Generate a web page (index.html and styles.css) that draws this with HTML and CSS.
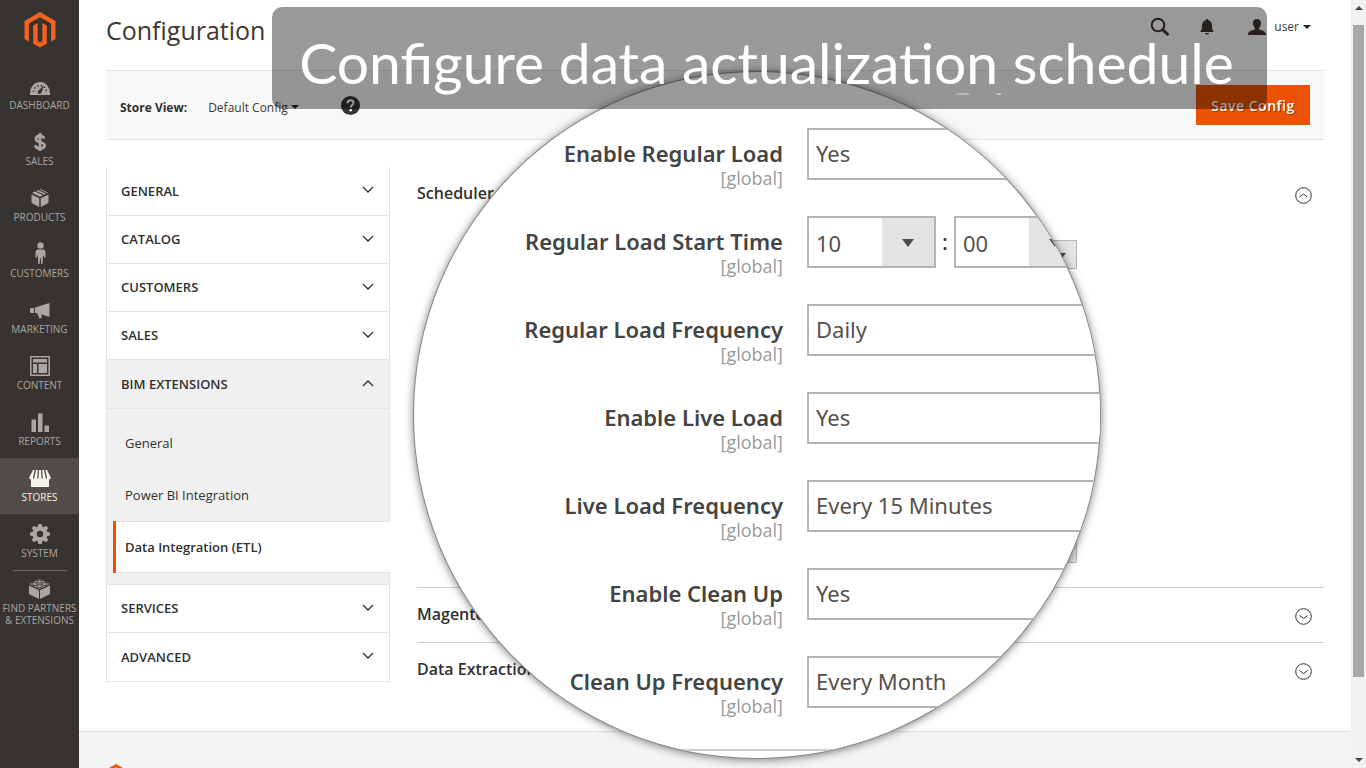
FILE: index.html
```html
<!DOCTYPE html>
<html lang="en">

<head>
    <meta charset="UTF-8">
    <meta name="viewport" content="width=device-width, initial-scale=1.0">
    <title>Configuration</title>
    <link rel="stylesheet" href="styles.css">
</head>

<body>
    <div class="page">
        <nav class="sidebar">
            <a href="#" class="logo" aria-label="Home">
                <svg width="32" height="36" viewBox="0 0 32 36" fill="#f26322">
                    <path d="M16 0L31.500 9v18l-4.500 2.600V11.600L16 5.200 5 11.600v18L.5 27V9z" />
                    <path d="M9.200 13.500l4.500-2.600v18.200l2.300 1.400 2.300-1.400V10.900l4.500 2.600v18.200L16 35.600l-6.800-3.900z" />
                </svg>
            </a>
            <ul class="menu">
                <li><a href="#">
                    <svg width="20" height="20" viewBox="0 0 20 20"><path fill="currentColor" d="M0 17a10 11 0 0 1 20 0v2H0z" /><path stroke="#373330" stroke-width="1.500" fill="none" stroke-dasharray="1.500 2" d="M3.500 16a6.500 6.500 0 0 1 13 0" /><path fill="#373330" d="M14 9l-2.300 7a2 2 0 1 1-2.600-2z" /></svg>
                    <span>DASHBOARD</span></a></li>
                <li><a href="#">
                    <svg width="20" height="20" viewBox="0 0 20 20"><path fill="none" stroke="currentColor" stroke-width="2.800" d="M14 6.500C13.500 4.500 12 4 10 4 7.500 4 6 5 6 7c0 4.500 8.500 2 8.500 6.500 0 2-2 3-4.500 3s-4.300-1-4.700-3.300M10 1v18" /></svg>
                    <span>SALES</span></a></li>
                <li><a href="#">
                    <svg width="20" height="20" viewBox="0 0 20 20" fill="currentColor"><path d="M1.500 6.500l7.800 3.700v8.800l-7.800-4zM18.500 6.500l-7.800 3.700v8.800l7.800-4zM2 5l3-1.500 8 3.800-3 1.500zM6.200 3L8 2.100l8 3.700-1.800.9zM9.500 1.500l1-.5L18 4.800l-.8.500z" /></svg>
                    <span>PRODUCTS</span></a></li>
                <li><a href="#">
                    <svg width="20" height="22" viewBox="0 0 20 22" fill="currentColor"><circle cx="10.500" cy="3.500" r="3.200" /><path d="M7 7.500h7l1.500 2v6H14l-.8-3L12.500 22h-1.300l-.5-6h-.6l-.5 6H8.300l-.6-9.500-.8 3H5.500v-6z" /></svg>
                    <span>CUSTOMERS</span></a></li>
                <li><a href="#">
                    <svg width="20" height="20" viewBox="0 0 20 20" fill="currentColor"><path d="M1 8h3v5H1l-1-1V9zM5 7.500L19.500 3v14L11 14.200l1 3.300-2.500 1.300L7.300 13.300 5 13z" /></svg>
                    <span>MARKETING</span></a></li>
                <li><a href="#">
                    <svg width="20" height="20" viewBox="0 0 20 20"><path fill="none" stroke="currentColor" stroke-width="1.500" d="M.8.800h18.400v18.400H.8z" /><path fill="currentColor" d="M3 3h14v3.500H3zM3 8h4v9H3zM8.500 8H17v9H8.500z" /></svg>
                    <span>CONTENT</span></a></li>
                <li><a href="#">
                    <svg width="20" height="20" viewBox="0 0 20 20" fill="currentColor"><path d="M1.500 7.500h4.500V20H1.500zM8 1.500h4.500V20H8zM14.500 13.500H19V20h-4.500z" /></svg>
                    <span>REPORTS</span></a></li>
                <li class="active"><a href="#">
                    <svg width="22" height="20" viewBox="0 0 22 20" fill="currentColor"><path d="M4 2h14l4 8a2.200 2.200 0 0 1-2 1.500V19H2v-7.500A2.200 2.200 0 0 1 0 10z" /><path stroke="#524d49" stroke-width="1.300" d="M6.300 2L4.500 10.500M9.500 2l-.7 8.500M12.500 2l.7 8.500M15.700 2l1.800 8.500" /></svg>
                    <span>STORES</span></a></li>
                <li><a href="#">
                    <svg width="20" height="20" viewBox="0 0 20 20"><g fill="currentColor"><circle cx="10" cy="10" r="7.500" /><path id="cog" d="M8.400 0h3.200l1 4v12l-1 4H8.400l-1-4V4z" /><use href="#cog" transform="rotate(45 10 10)" /><use href="#cog" transform="rotate(90 10 10)" /><use href="#cog" transform="rotate(135 10 10)" /></g><circle cx="10" cy="10" r="3.200" fill="#373330" /></svg>
                    <span>SYSTEM</span></a></li>
                <li class="partners"><a href="#">
                    <svg width="21" height="20" viewBox="0 0 21 20"><path fill="currentColor" d="M0 6.500l10 4.800V20L0 15zM21 6.500l-10 4.800V20l10-5zM.5 5L10.500 0l10 5-10 5z" /><g fill="currentColor" stroke="#373330"><ellipse cx="10.500" cy="2.600" rx="2.600" ry="1.500" /><ellipse cx="5.500" cy="5" rx="2.600" ry="1.500" /><ellipse cx="15.500" cy="5" rx="2.600" ry="1.500" /><ellipse cx="10.500" cy="7.300" rx="2.600" ry="1.500" /></g></svg>
                    <span>FIND PARTNERS &amp; EXTENSIONS</span></a></li>
            </ul>
        </nav>

        <div class="wrapper">
            <header class="header">
                <h1>Configuration</h1>
                <div class="header-tools">
                    <button class="icon-button" aria-label="Search">
                        <svg width="20" height="20" viewBox="0 0 20 20" fill="none" stroke="#41362f"><circle cx="8" cy="8" r="6.300" stroke-width="2" /><path stroke-width="3" d="M12.800 12.800l5.700 5.200" /></svg>
                    </button>
                    <button class="icon-button" aria-label="Notifications">
                        <svg width="14" height="16" viewBox="0 0 14 16" fill="#41362f"><path d="M7 0a1.500 1.500 0 0 1 1.400 1.300C11 2 12 4 12 7c0 3 .5 4.500 2 6H0c1.500-1.500 2-3 2-6 0-3 1-5 3.600-5.700A1.500 1.500 0 0 1 7 0zM5 14h4a2 1.500 0 0 1-4 0z" /></svg>
                    </button>
                    <button class="user">
                        <svg width="18" height="16" viewBox="0 0 18 16" fill="#41362f"><path d="M9 0c2.700 0 4 1.800 4 4.300 0 2-.8 3.700-1.900 4.700v1.600c3 .9 6.900 1.400 6.900 5.400H0c0-4 3.900-4.500 6.900-5.400V9C5.800 8 5 6.300 5 4.300 5 1.800 6.300 0 9 0z" /></svg>
                        <span class="user-name">user <span class="caret"></span></span>
                    </button>
                </div>
            </header>

            <div class="toolbar">
                <span class="store-label">Store View:</span>
                <button class="store-switch">Default Config <span class="caret"></span></button>
                <button class="help" aria-label="Help">
                    <svg width="19" height="19" viewBox="0 0 19 19"><circle cx="9.500" cy="9.500" r="9.500" fill="#373330" /><path fill="none" stroke="#fff" stroke-width="2" d="M6.500 7.200c0-2 1.300-3 3-3s3 1 3 2.600c0 2.200-2.800 2.300-2.800 4.700" /><circle cx="9.700" cy="14.200" r="1.300" fill="#fff" /></svg>
                </button>
                <button class="save">Save Config</button>
            </div>

            <main class="columns">
                <nav class="tabs">
                    <button class="tab">GENERAL <svg class="chevron" viewBox="0 0 12 8"><path d="M1 1l5 5 5-5" /></svg></button>
                    <button class="tab">CATALOG <svg class="chevron" viewBox="0 0 12 8"><path d="M1 1l5 5 5-5" /></svg></button>
                    <button class="tab">CUSTOMERS <svg class="chevron" viewBox="0 0 12 8"><path d="M1 1l5 5 5-5" /></svg></button>
                    <button class="tab">SALES <svg class="chevron" viewBox="0 0 12 8"><path d="M1 1l5 5 5-5" /></svg></button>
                    <button class="tab open">BIM EXTENSIONS <svg class="chevron" viewBox="0 0 12 8"><path d="M1 7l5-5 5 5" /></svg></button>
                    <ul class="subtabs">
                        <li><a href="#">General</a></li>
                        <li><a href="#">Power BI Integration</a></li>
                        <li class="current"><a href="#">Data Integration (ETL)</a></li>
                    </ul>
                    <button class="tab">SERVICES <svg class="chevron" viewBox="0 0 12 8"><path d="M1 1l5 5 5-5" /></svg></button>
                    <button class="tab">ADVANCED <svg class="chevron" viewBox="0 0 12 8"><path d="M1 1l5 5 5-5" /></svg></button>
                </nav>

                <div class="sections">
                    <section class="section">
                        <button class="section-title">Scheduler
                            <svg class="toggle" viewBox="0 0 17 17"><circle cx="8.500" cy="8.500" r="7.800" /><path d="M4.500 10l4-3 4 3" /></svg>
                        </button>
                        <div class="section-body">
                            <span class="select small"><select aria-label="Regular load"><option></option></select></span>
                            <span class="select small"><select aria-label="Clean up"><option></option></select></span>
                        </div>
                    </section>
                    <section class="section">
                        <button class="section-title">Magento
                            <svg class="toggle" viewBox="0 0 17 17"><circle cx="8.500" cy="8.500" r="7.800" /><path d="M4.500 7.500l4 3 4-3" /></svg>
                        </button>
                    </section>
                    <section class="section">
                        <button class="section-title">Data Extraction
                            <svg class="toggle" viewBox="0 0 17 17"><circle cx="8.500" cy="8.500" r="7.800" /><path d="M4.500 7.500l4 3 4-3" /></svg>
                        </button>
                    </section>
                </div>
            </main>

            <footer class="footer">
                <svg width="20" height="22" viewBox="0 0 32 36" fill="#eb5202"><path d="M16 0L31.500 9v18l-4.500 2.600V11.600L16 5.200 5 11.600v18L.5 27V9z" /></svg>
            </footer>
        </div>

        <div class="scrollbar">
            <span class="arrow up"></span>
            <span class="thumb"></span>
            <span class="arrow down"></span>
        </div>
    </div>

    <!-- magnified scheduler form -->
    <form class="lens">
        <div class="field">
            <label for="regular">Enable Regular Load <small>[global]</small></label>
            <span class="select"><select id="regular"><option>Yes</option></select></span>
        </div>
        <div class="field">
            <label for="hour">Regular Load Start Time <small>[global]</small></label>
            <div class="time">
                <span class="select"><select id="hour"><option>10</option></select></span>
                <span>:</span>
                <span class="select"><select aria-label="Minutes"><option>00</option></select></span>
            </div>
        </div>
        <div class="field">
            <label for="frequency">Regular Load Frequency <small>[global]</small></label>
            <span class="select"><select id="frequency"><option>Daily</option></select></span>
        </div>
        <div class="field">
            <label for="live">Enable Live Load <small>[global]</small></label>
            <span class="select"><select id="live"><option>Yes</option></select></span>
        </div>
        <div class="field">
            <label for="live-frequency">Live Load Frequency <small>[global]</small></label>
            <span class="select"><select id="live-frequency"><option>Every 15 Minutes</option></select></span>
        </div>
        <div class="field">
            <label for="clean">Enable Clean Up <small>[global]</small></label>
            <span class="select"><select id="clean"><option>Yes</option></select></span>
        </div>
        <div class="field">
            <label for="clean-frequency">Clean Up Frequency <small>[global]</small></label>
            <span class="select"><select id="clean-frequency"><option>Every Month</option></select></span>
        </div>
        <hr>
    </form>

    <div class="banner">
        Configure data actualization schedule
        <svg class="marks" width="46" height="2" viewBox="0 0 46 2" fill="#ddd"><path d="M0 1q7-1.500 14 0v.5H0zM41 .5h4V2h-4z" /></svg>
    </div>
</body>

</html>
```

FILE: styles.css
```css
* {
    box-sizing: border-box;
}

body {
    margin: 0;
    height: 100vh;
    overflow: hidden;
    position: relative;
    font-family: "Open Sans", "Noto Sans", sans-serif;
    font-size: 13px;
    color: #303030;
    background-color: #fff;
}

button {
    font: inherit;
    color: inherit;
    background: none;
    border: none;
    padding: 0;
    cursor: pointer;
}

a {
    color: inherit;
    text-decoration: none;
}

ul {
    list-style: none;
    margin: 0;
    padding: 0;
}

.page {
    display: flex;
    height: 100%;
}

/* left menu */
.sidebar {
    width: 79px;
    flex-shrink: 0;
    background-color: #373330;
    color: #aaa6a0;
}

.logo {
    display: flex;
    justify-content: center;
    height: 66px;
    padding-top: 12px;
}

.menu li {
    height: 56px;
    font-size: 10px;
    line-height: 12px;
    text-align: center;
}

.menu a {
    display: flex;
    flex-direction: column;
    align-items: center;
    justify-content: flex-end;
    gap: 3px;
    height: 100%;
    padding-bottom: 11px;
}

.menu .active {
    background-color: #524d49;
    color: #f7f3eb;
}

.menu .partners {
    height: auto;
    margin: 0 -8px;
}

.menu .partners a {
    padding: 8px 8px 0;
}

.menu .partners::before {
    content: "";
    display: block;
    width: 54px;
    margin: 0 auto;
    border-top: 1px solid #736963;
}

.wrapper {
    flex: 1;
    display: flex;
    flex-direction: column;
    min-width: 0;
    overflow: hidden;
}

/* header */
.header {
    display: flex;
    flex-shrink: 0;
    justify-content: space-between;
    height: 70px;
    padding: 0 40px 0 27px;
}

h1 {
    margin: 13px 0 0;
    font-size: 25px;
    line-height: 34px;
    font-weight: 400;
    color: #41362f;
}

.header-tools {
    display: flex;
    align-items: center;
    gap: 30px;
    height: 53px;
}

.header-tools button {
    display: flex;
    align-items: center;
}

.header-tools .user {
    gap: 8px;
    margin-left: 4px;
    font-size: 12px;
    color: #41362f;
}

.user-name {
    display: flex;
    align-items: center;
    gap: 4px;
}

.caret {
    display: inline-block;
    border: 4px solid transparent;
    border-top-color: #222;
    border-bottom: none;
}

.toolbar {
    display: flex;
    flex-shrink: 0;
    align-items: center;
    height: 70px;
    margin: 0 27px;
    padding: 0 14px;
    background-color: #f8f8f8;
    border-top: 1px solid #e3e3e3;
    border-bottom: 1px solid #e3e3e3;
}

.store-label {
    font-size: 12px;
    font-weight: 700;
    padding-top: 4px;
}

.store-switch {
    display: flex;
    align-items: center;
    gap: 3px;
    margin-left: 21px;
    padding-top: 4px;
    font-size: 12px;
    color: #41362f;
}

.help {
    display: flex;
    margin-left: 42px;
}

.save {
    width: 114px;
    height: 40px;
    margin-left: auto;
    background-color: #eb5202;
    color: #fff;
    font-size: 14px;
    font-weight: 600;
    letter-spacing: 0.5px;
    text-shadow: 1px 1px 0 rgba(0, 0, 0, 0.3);
}

/* config tabs */
.columns {
    display: flex;
    flex-shrink: 0;
    gap: 27px;
    height: 591px;
    padding: 27px 27px 0;
}

.tabs {
    width: 284px;
    flex-shrink: 0;
}

.tab {
    display: flex;
    align-items: center;
    justify-content: space-between;
    width: 100%;
    height: 48px;
    padding: 0 15px 1px 14px;
    border: 1px solid #e3e3e3;
    border-top: none;
    font-size: 13px;
    font-weight: 600;
}

.tab:first-child,
.tab.open,
.tab:last-child {
    height: 49px;
}

.chevron {
    width: 12px;
    height: 8px;
    margin-bottom: 1px;
    fill: none;
    stroke: #303030;
    stroke-width: 1.3;
}

.open,
.subtabs {
    background-color: #f0f0f0;
}

.subtabs {
    padding: 8px 0 11px 6px;
    border: 1px solid #e3e3e3;
    border-top: none;
}

.subtabs a {
    display: block;
    height: 52px;
    padding-left: 12px;
    line-height: 52px;
}

.subtabs .current {
    margin-right: -1px;
    background-color: #fff;
    border: solid #e3e3e3;
    border-width: 1px 0;
    font-weight: 600;
}

.subtabs .current a {
    height: 52px;
    margin: -1px 0;
    padding-left: 9px;
    border-left: 3px solid #eb5202;
}

/* config sections */
.sections {
    flex: 1;
}

.section {
    border-bottom: 1px solid #ccc;
}

.section:last-child {
    border-bottom: none;
}

.section-title {
    display: flex;
    align-items: center;
    justify-content: space-between;
    width: 100%;
    height: 54px;
    padding: 0 12px 2px 0;
    font-size: 16px;
    font-weight: 600;
}

.toggle {
    width: 17px;
    height: 17px;
    margin-top: 4px;
    fill: none;
    stroke: #303030;
}

.section-body {
    display: flex;
    flex-direction: column;
    justify-content: space-between;
    align-items: flex-start;
    height: 366px;
    padding: 19px 0 24px 460px;
}

.footer {
    flex: 1 0 auto;
    padding: 32px 27px 0;
    background-color: #f4f4f4;
    border-top: 1px solid #ddd;
}

.footer svg {
    display: block;
}

/* window scrollbar */
.scrollbar {
    display: flex;
    flex-direction: column;
    align-items: center;
    width: 15px;
    padding: 6px 0;
    background-color: #f1f1f1;
}

.thumb {
    width: 11px;
    height: 652px;
    margin-top: 15px;
    background-color: #a8a8a8;
}

.arrow {
    border: 4px solid transparent;
}

.up {
    border-bottom-color: #444;
    border-top: none;
}

.down {
    margin-top: auto;
    border-top-color: #444;
    border-bottom: none;
}

/* selects */
.select {
    display: block;
    position: relative;
}

.select select {
    appearance: none;
    width: 100%;
    height: 52px;
    padding: 0 60px 3px 7px;
    border: 2px solid #b3b3b3;
    border-radius: 1px;
    background: linear-gradient(#e3e3e3, #e3e3e3) no-repeat right / 52px 100% #fff;
    font: inherit;
    color: #58504b;
}

.select::after {
    content: "";
    position: absolute;
    right: 22px;
    top: 23px;
    border: 6px solid transparent;
    border-top: 8px solid #514943;
    border-bottom: none;
}

.small select {
    width: 200px;
    height: 29px;
    border-width: 1px;
    background-size: 28px 100%;
}

.small::after {
    right: 11px;
    top: 13px;
    border-width: 5px 4px 0;
}

/* magnifier */
.lens {
    position: absolute;
    left: 414px;
    top: 72px;
    width: 686px;
    height: 686px;
    padding-top: 56px;
    overflow: hidden;
    border-radius: 50%;
    background-color: #fff;
    box-shadow: 0 0 0 1px #888, 0 1px 8px 1px rgba(0, 0, 0, 0.5);
    font-family: "Noto Sans", sans-serif;
    font-size: 22px;
}

.field {
    display: grid;
    grid-template-columns: 369px 400px;
    gap: 24px;
    height: 88px;
}

.field label {
    padding-top: 12px;
    line-height: 26px;
    font-weight: 600;
    text-align: right;
    color: #444;
}

.field small {
    display: block;
    font-family: "Open Sans", sans-serif;
    font-size: 18px;
    line-height: 24px;
    font-weight: 400;
    color: #999;
}

.time {
    display: flex;
    gap: 6px;
    line-height: 50px;
}

.time .select {
    width: 129px;
}

.lens hr {
    margin: 5px 0 0;
    border: none;
    border-top: 2px solid #ccc;
}

/* caption over the page */
.banner {
    position: absolute;
    left: 272px;
    top: 7px;
    width: 995px;
    height: 102px;
    padding-right: 6px;
    border-radius: 10px;
    background-color: rgba(0, 0, 0, 0.4);
    color: #fff;
    font-family: Lato, sans-serif;
    font-size: 57px;
    line-height: 110px;
    text-align: center;
    white-space: nowrap;
}

.marks {
    position: absolute;
    left: 684px;
    top: 86px;
}
```
